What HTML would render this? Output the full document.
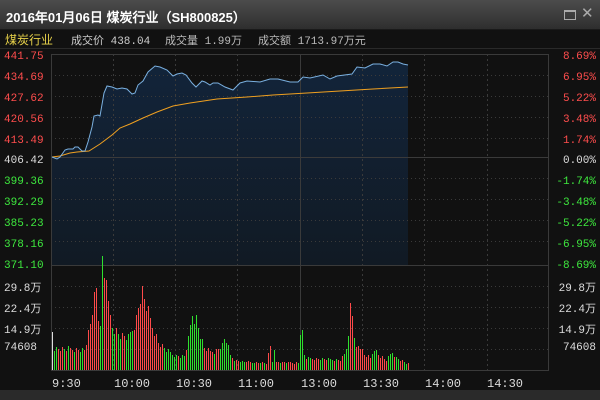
<!DOCTYPE html><html><head><meta charset="utf-8"><style>
body{margin:0;width:600px;height:400px;background:#111;overflow:hidden;font-family:"Liberation Mono","WenQuanYi Zen Hei",monospace;position:relative}
.t{position:absolute;white-space:nowrap}
#title{position:absolute;left:0;top:0;width:600px;height:29px;background:linear-gradient(#4c4c4c,#2e2e2e);border-bottom:1px solid #1a1a1a}
.l{font-size:11px;left:4px}.r{font-size:11px;right:4px;text-align:right}
.red{color:#ff4d4d}.grn{color:#3ee83e}.wh{color:#ddd}
.p{margin-top:4px}
</style></head><body>
<div id="title"></div>
<div class="t" style="left:6px;top:7px;color:#fff;font-weight:bold;font-size:13px;font-family:'Liberation Sans','WenQuanYi Zen Hei',sans-serif">2016年01月06日 煤炭行业（SH800825）</div>
<div class="t" style="left:564px;top:10px;width:10px;height:7px;border:1px solid #aaa;border-top-width:2px"></div>
<div class="t" style="left:581px;top:4px;color:#aaa;font-size:15px;font-family:'DejaVu Sans',sans-serif">✕</div>
<div class="t" style="left:5px;top:31px;font-size:12px;color:#e8d24a;font-family:'Liberation Sans','WenQuanYi Zen Hei',sans-serif">煤炭行业</div>
<div class="t" style="left:71px;top:32px;font-size:11px;color:#ccc">成交价 438.04</div>
<div class="t" style="left:165px;top:32px;font-size:11px;color:#bbb">成交量 1.99万</div>
<div class="t" style="left:258px;top:32px;font-size:11px;color:#bbb">成交额 1713.97万元</div>
<div class="t l red p" style="top:47px">441.75</div>
<div class="t l red p" style="top:68px">434.69</div>
<div class="t l red p" style="top:89px">427.62</div>
<div class="t l red p" style="top:110px">420.56</div>
<div class="t l red p" style="top:131px">413.49</div>
<div class="t l wh p" style="top:151px">406.42</div>
<div class="t l grn p" style="top:172px">399.36</div>
<div class="t l grn p" style="top:193px">392.29</div>
<div class="t l grn p" style="top:214px">385.23</div>
<div class="t l grn p" style="top:235px">378.16</div>
<div class="t l grn p" style="top:256px">371.10</div>
<div class="t r red p" style="top:47px">8.69%</div>
<div class="t r red p" style="top:68px">6.95%</div>
<div class="t r red p" style="top:89px">5.22%</div>
<div class="t r red p" style="top:110px">3.48%</div>
<div class="t r red p" style="top:131px">1.74%</div>
<div class="t r wh p" style="top:151px">0.00%</div>
<div class="t r grn p" style="top:172px">-1.74%</div>
<div class="t r grn p" style="top:193px">-3.48%</div>
<div class="t r grn p" style="top:214px">-5.22%</div>
<div class="t r grn p" style="top:235px">-6.95%</div>
<div class="t r grn p" style="top:256px">-8.69%</div>
<div class="t l wh" style="top:279px">29.8万</div>
<div class="t l wh" style="top:300px">22.4万</div>
<div class="t l wh" style="top:321px">14.9万</div>
<div class="t l wh" style="top:342px">74608</div>
<div class="t r wh" style="top:279px">29.8万</div>
<div class="t r wh" style="top:300px">22.4万</div>
<div class="t r wh" style="top:321px">14.9万</div>
<div class="t r wh" style="top:342px">74608</div>
<svg width="600" height="400" style="position:absolute;left:0;top:0">
<defs><linearGradient id="g" x1="0" y1="0" x2="0" y2="1"><stop offset="0" stop-color="#12243a"/><stop offset="1" stop-color="#111a24"/></linearGradient></defs>
<line x1="0" y1="48.5" x2="600" y2="48.5" stroke="#2a2a2a"/>
<path id="fill" fill="url(#g)"/>
<g id="grid" stroke="#3a3a3a" stroke-dasharray="2,3"></g>
<line x1="51" y1="157.5" x2="549" y2="157.5" stroke="#3a3a3a"/>
<line x1="51" y1="265.5" x2="549" y2="265.5" stroke="#3a3a3a"/>
<line x1="300.5" y1="54" x2="300.5" y2="370" stroke="#3a3a3a"/>
<rect x="51.5" y="54.5" width="497" height="316" fill="none" stroke="#3a3a3a"/>
<polyline id="avg" fill="none" stroke="#f0a020" stroke-width="1"/>
<polyline id="px" fill="none" stroke="#7ab0e0" stroke-width="1"/>
<g id="vol"></g>
<rect x="0" y="390" width="600" height="10" fill="#2a2a2a"/>
<g fill="#ddd" font-size="12" font-family="Liberation Mono,monospace">
<text x="52" y="387">9:30</text><text x="114" y="387">10:00</text><text x="176" y="387">10:30</text><text x="238" y="387">11:00</text><text x="301" y="387">13:00</text><text x="363" y="387">13:30</text><text x="425" y="387">14:00</text><text x="487" y="387">14:30</text></g>
</svg>
<script>
var ns="http://www.w3.org/2000/svg";
function el(p,n,a){var e=document.createElementNS(ns,n);for(var k in a)e.setAttribute(k,a[k]);document.getElementById(p).appendChild(e);}
[113,175,237,362,424,487].forEach(function(x){el("grid","line",{x1:x+.5,y1:54,x2:x+.5,y2:370});});
[75,96,117,138,178,199,220,241,286,307,328,349].forEach(function(y){el("grid","line",{x1:51,y1:y+.5,x2:549,y2:y+.5,"stroke-dasharray":"1,3"});});
var P="52,157 57,159 60,157 65,150 68,149 73,149 75,147 78,147 82,151 85,151 88,142 92,127 94,116 98,115 100,116 104,93 107,86 112,87 117,89 122,88 127,89 132,94 135,93 138,85 143,81 148,72 155,66 160,67 167,70 173,76 177,74 182,73 186,75 192,83 196,87 202,81 205,82 210,85 213,83 218,83 225,87 233,90 240,83 247,81 260,82 270,79 278,79 290,82 298,82 303,77 310,78 323,75 330,79 337,76 352,74 357,67 365,68 373,64 380,64 387,66 393,62 398,62 403,64 408,65";
document.getElementById("px").setAttribute("points",P);
document.getElementById("fill").setAttribute("d","M52,265 L"+P.replace(/ /g," L")+" L408,265 Z");
document.getElementById("avg").setAttribute("points","52,157 60,156 70,153 77,152 89,151 100,144 112,135 120,128 130,124 143,118 157,112 173,106 190,103 217,99 247,97 273,95 307,93 340,91 373,89 408,87");
var K=[[54,22],[84,20],[86,27],[88,36],[90,45],[92,58],[94,92],[96,77],[98,50],[100,50],[102,105],[104,92],[106,99],[108,62],[112,45],[120,35],[128,32],[132,42],[136,52],[140,75],[142,77],[146,65],[150,50],[154,40],[158,28],[166,20],[176,14],[184,14],[188,30],[192,57],[196,52],[200,35],[204,22],[210,18],[216,20],[222,25],[225,34],[230,15],[236,9],[266,7],[270,23],[272,9],[274,24],[276,8],[298,7],[301,57],[303,17],[306,12],[340,10],[344,16],[348,30],[350,65],[352,57],[354,38],[356,22],[358,25],[360,24],[364,15],[370,12],[374,22],[378,15],[386,10],[392,18],[396,12],[408,6]];
var cols="GGRRRGRGRRGRRGGRRRRRRRRGGRRRRGGRGGRRGGGGRRRRRRRRRRRRRRRGGGGGGGRGGGRGGGGGGGGRRRRRGRRGGGGGGRGRRGGGRRRGGRRGRGRRRGGRRGRRGRRRRRGGGGRGGRRRRGGRRGGGRGRRRGGGRRGRRRRRRRRGGGRRRRRGGGRGGRRGGRRGG";
el("vol","rect",{x:52,y:332,width:1,height:38,fill:"#ddd"});
var i=0;
for(var x=54;x<=408;x+=2){var j=0;while(j<K.length-1&&K[j+1][0]<x)j++;var a=K[j],b=K[Math.min(j+1,K.length-1)];var h=b[0]==a[0]?a[1]:a[1]+(b[1]-a[1])*(x-a[0])/(b[0]-a[0]);h=Math.max(2,Math.round(h*(0.85+0.3*((i*37)%10)/10)));
var c=cols[i%cols.length]=="R"?"#ff4a4a":"#2ee02e";el("vol","rect",{x:x,y:370-h,width:1,height:h,fill:c});i++;}
</script>
</body></html>
